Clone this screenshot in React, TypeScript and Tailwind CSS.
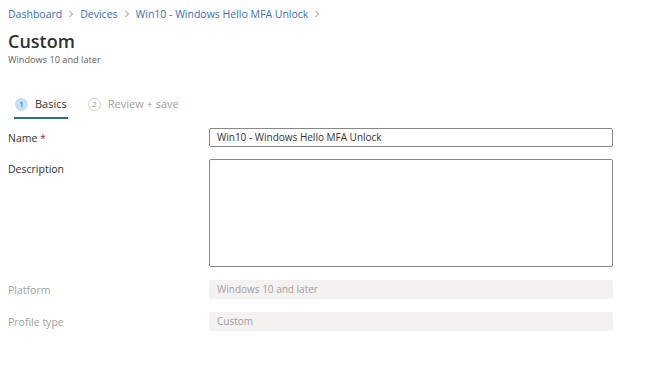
const font = { fontFamily: '"Open Sans", "Noto Sans", sans-serif' }

function Chevron() {
  return (
    <svg width="8" height="8" viewBox="0 0 8 8" fill="none" stroke="#8a8886" strokeWidth="1" className="mx-[5px]">
      <path d="M2.5 1l3 3-3 3" />
    </svg>
  )
}

function Row({ label, children, disabled, required }: { label: string; children: React.ReactNode; disabled?: boolean; required?: boolean }) {
  return (
    <div className="flex items-start">
      <div className={`w-[201px] shrink-0 pt-[3px] text-[10.5px] ${disabled ? 'text-[#a19f9d]' : 'text-[#323130]'}`}>
        {label}
        {required && <span className="text-[#a4262c]"> *</span>}
      </div>
      {children}
    </div>
  )
}

export default function App() {
  return (
    <div className="w-[654px] h-[377px] bg-white px-[8px] pt-[6px]" style={font}>
      <nav className="flex items-center text-[10.5px] text-[#3b6fb6] leading-[16px]">
        <span>Dashboard</span>
        <Chevron />
        <span>Devices</span>
        <Chevron />
        <span>Win10 - Windows Hello MFA Unlock</span>
        <Chevron />
      </nav>
      <h1 className="mt-[7px] text-[18px] font-semibold text-[#323130] leading-[24px]">Custom</h1>
      <div className="text-[9.2px] text-[#605e5c] leading-[14px]">Windows 10 and later</div>

      <div className="mt-[29px] flex items-center text-[11px] leading-[16px]">
        <div className="flex flex-col ml-[6px]">
          <div className="flex items-center gap-[7px] px-[1px]">
            <span className="w-[13px] h-[13px] rounded-full bg-[#c7e0f4] text-[#0b5a9e] text-[8px] flex items-center justify-center">1</span>
            <span className="text-[#323130]">Basics</span>
          </div>
          <div className="mt-[5px] h-[2px] bg-[#2b6a9c]" />
        </div>
        <div className="flex items-center gap-[7px] ml-[20px] mb-[7px]">
          <span className="w-[13px] h-[13px] rounded-full border border-[#d2d0ce] text-[#a19f9d] text-[8px] flex items-center justify-center">2</span>
          <span className="text-[#a19f9d]">Review + save</span>
        </div>
      </div>

      <div className="mt-[9px] flex flex-col">
        <Row label="Name" required>
          <div className="w-[404px] h-[19px] border border-[#8a8886] rounded-[2px] px-[7px] text-[10px] text-[#323130] flex items-center">
            Win10 - Windows Hello MFA Unlock
          </div>
        </Row>
        <div className="mt-[12px]">
          <Row label="Description">
            <div className="w-[404px] h-[108px] border border-[#8a8886] rounded-[2px]" />
          </Row>
        </div>
        <div className="mt-[13px]">
          <Row label="Platform" disabled>
            <div className="w-[404px] h-[19px] bg-[#f3f2f1] rounded-[2px] px-[8px] text-[10px] text-[#a19f9d] flex items-center">
              Windows 10 and later
            </div>
          </Row>
        </div>
        <div className="mt-[13px]">
          <Row label="Profile type" disabled>
            <div className="w-[404px] h-[19px] bg-[#f3f2f1] rounded-[2px] px-[8px] text-[10px] text-[#a19f9d] flex items-center">
              Custom
            </div>
          </Row>
        </div>
      </div>
    </div>
  )
}
